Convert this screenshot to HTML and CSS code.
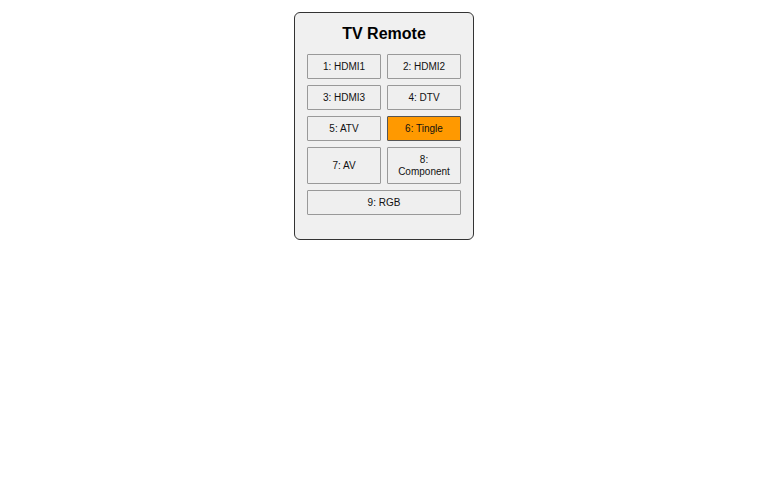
FILE: index.html
```html
<!DOCTYPE html>
<html lang="en">
<head>
    <meta charset="UTF-8">
    <meta name="viewport" content="width=device-width, initial-scale=1.0">
    <title>TV Remote</title>
    <link rel="stylesheet" href="styles.css">
</head>
<body>
    <div class="remote">
        <h1>TV Remote</h1>
        <div class="inputs">
            <button class="input">1: HDMI1</button>
            <button class="input">2: HDMI2</button>
            <button class="input">3: HDMI3</button>
            <button class="input">4: DTV</button>
            <button class="input">5: ATV</button>
            <button class="input active">6: Tingle</button>
            <button class="input">7: AV</button>
            <button class="input">8:<br>Component</button>
            <button class="input wide">9: RGB</button>
        </div>
    </div>
</body>
</html>
```

FILE: styles.css
```css
body {
    font-family: 'Liberation Sans', Arial, sans-serif;
    background-color: #fff;
    margin: 0;
    padding: 12px 0;
}
.remote {
    width: 154px;
    margin: 0 auto;
    background: #f0f0f0;
    border: 1px solid #333;
    border-radius: 6px;
    padding: 12px 12px 24px;
}
h1 {
    font-size: 16px;
    line-height: 18px;
    text-align: center;
    color: #000;
    margin: 0 0 11px;
}
.inputs {
    display: grid;
    grid-template-columns: 1fr 1fr;
    gap: 6px 6px;
}
.input {
    font-family: inherit;
    font-size: 10px;
    line-height: 11.5px;
    padding: 6px 2px 5.5px;
    background-color: #efefef;
    color: #111;
    border: 1px solid #999;
    border-radius: 1px;
    cursor: pointer;
}
.input:hover {
    background-color: #e4e4e4;
}
.input.active {
    background-color: #ff9900;
    border-color: #555;
}
.input.wide {
    grid-column: span 2;
}
```
